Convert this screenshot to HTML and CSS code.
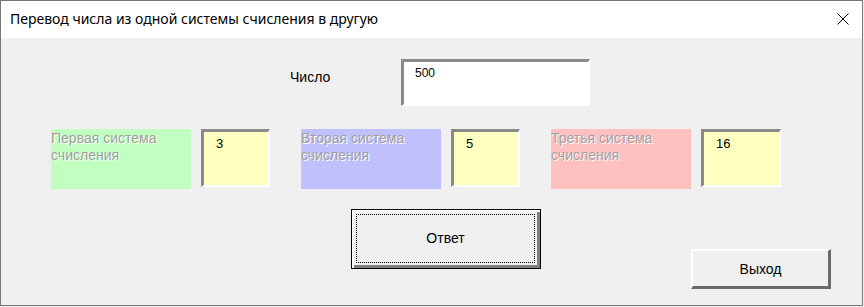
FILE: index.html
```html
<!DOCTYPE html>
<html lang="ru">
<head>
    <meta charset="UTF-8">
    <title>Перевод числа из одной системы счисления в другую</title>
    <link rel="stylesheet" href="styles.css">
</head>
<body>
    <div class="window">
        <div class="titlebar">
            <span class="title">Перевод числа из одной системы счисления в другую</span>
            <svg class="close" width="12" height="12" viewBox="0 0 12 12">
                <path d="M0.5 0.5 L11.5 11.5 M11.5 0.5 L0.5 11.5" stroke="#000" stroke-width="1" fill="none"/>
            </svg>
        </div>

        <div class="form">
            <div class="number-row">
                <span class="number-label">Число</span>
                <div class="field field-number">500</div>
            </div>

            <div class="systems">
                <div class="system">
                    <div class="caption caption-green">Первая система счисления</div>
                    <div class="field field-base">3</div>
                </div>
                <div class="system">
                    <div class="caption caption-blue">Вторая система счисления</div>
                    <div class="field field-base">5</div>
                </div>
                <div class="system">
                    <div class="caption caption-red">Третья система счисления</div>
                    <div class="field field-base field-wide">16</div>
                </div>
            </div>

            <div class="actions">
                <button class="btn btn-default"><span class="focus">Ответ</span></button>
                <button class="btn btn-exit">Выход</button>
            </div>
        </div>
    </div>
</body>
</html>
```

FILE: styles.css
```css
body {
    margin: 0;
    background-color: #f0f0f0;
    font-family: 'Liberation Sans', Arial, sans-serif;
    font-size: 13px;
    color: #000;
}
.window {
    width: 861px;
    height: 304px;
    border: 1px solid #777;
    background-color: #f0f0f0;
}
.titlebar {
    height: 37px;
    background-color: #fff;
    display: flex;
    align-items: center;
    padding: 0 13px 0 9px;
}
.title {
    font-family: 'Noto Sans', sans-serif;
    font-size: 14px;
    flex: 1;
    padding-bottom: 2px;
}
.close {
    display: block;
    margin-bottom: 1px;
}
.form {
    padding-left: 50px;
}
.number-row {
    display: flex;
    margin-top: 21px;
    padding-left: 239px;
}
.number-label {
    width: 111px;
    padding-top: 10px;
    font-size: 14px;
}
.field {
    box-sizing: border-box;
    border-style: solid;
    border-color: #8a8a8a #fff #fff #8a8a8a;
    padding: 6px 12px;
    font-size: 13px;
}
.field-number {
    width: 189px;
    height: 47px;
    border-width: 3px 2px 2px 3px;
    background-color: #fff;
    font-size: 12px;
    padding: 4px 11px;
}
.systems {
    display: flex;
    gap: 31px;
    margin-top: 23px;
}
.system {
    display: flex;
    gap: 10px;
    align-items: flex-start;
}
.caption {
    width: 140px;
    height: 60px;
    box-sizing: border-box;
    padding-top: 1px;
    font-size: 14px;
    line-height: 17px;
    color: #a0a0a0;
    text-shadow: 1px 1px 0 #fff;
}
.caption-green {
    background-color: #c0ffc0;
}
.caption-blue {
    background-color: #c0c0ff;
}
.caption-red {
    background-color: #ffc0c0;
}
.field-base {
    width: 69px;
    height: 58px;
    border-width: 3px 2px 2px 3px;
    background-color: #ffffc0;
    padding: 4px 12px;
}
.field-wide {
    width: 80px;
}
.actions {
    display: flex;
    align-items: flex-start;
    margin-top: 20px;
    padding-left: 300px;
}
.btn {
    font-family: 'Liberation Sans', Arial, sans-serif;
    font-size: 14px;
    color: #000;
    background-color: #f0f0f0;
    box-sizing: border-box;
    padding: 0;
    cursor: pointer;
}
.btn-default {
    width: 190px;
    height: 60px;
    border: 1px solid #000;
    box-shadow: inset 2px 2px 0 #fff, inset -3px -3px 0 #808080;
    display: flex;
    padding: 4px 5px 5px 4px;
}
.focus {
    flex: 1;
    border: 1px dotted #000;
    display: flex;
    align-items: center;
    justify-content: center;
    padding-bottom: 2px;
}
.btn-exit {
    width: 140px;
    height: 40px;
    margin-left: 150px;
    margin-top: 40px;
    border-style: solid;
    border-width: 2px 3px 3px 2px;
    border-color: #fff #6a6a6a #6a6a6a #fff;
}
```
